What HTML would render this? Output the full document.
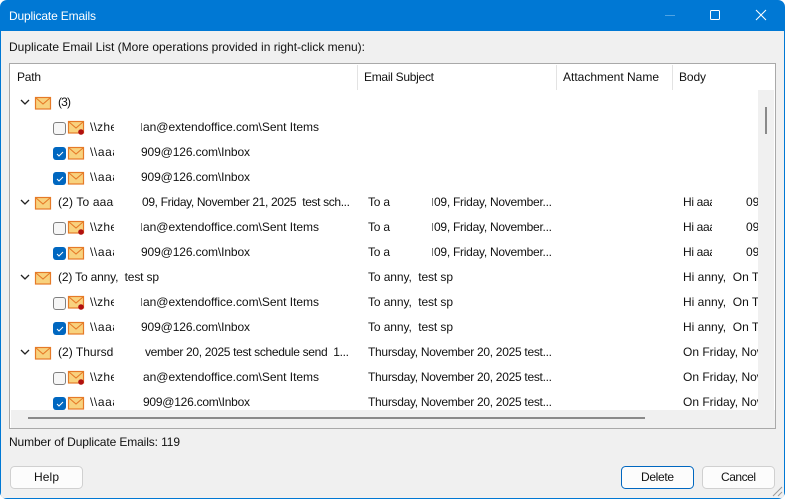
<!DOCTYPE html>
<html><head><meta charset="utf-8"><style>
html,body{margin:0;padding:0;width:785px;height:499px;overflow:hidden;background:#fff}
svg{display:block;font-family:"Liberation Sans",sans-serif;font-size:12px;fill:#111}
text{white-space:pre}
</style></head><body>
<svg width="785" height="499" viewBox="0 0 785 499" xmlns="http://www.w3.org/2000/svg">
<defs>
<g id="env"><rect x=".5" y=".5" width="15" height="11.500" fill="#f8d27e" stroke="#e67a28" stroke-width="1.200"/><path d="M1 1l7 6 7-6" fill="none" stroke="#e67a28" stroke-width="1.100"/></g>
<g id="chev"><path d="M21 100l4 4 4-4" fill="none" stroke="#222" stroke-width="1.300"/></g>
<g id="unc"><rect x="53.500" y="-5.500" width="12" height="12" rx="2.500" fill="#f6f6f6" stroke="#808080"/></g>
<g id="chk"><rect x="53" y="-6" width="13" height="13" rx="3" fill="#0067c0"/><path d="M57 1l2 2 4-4" fill="none" stroke="#fff"/></g>
<g id="sent"><use href="#unc"/><use href="#env" x="68" y="-7"/><circle cx="81" cy="4" r="2.800" fill="#b01010"/></g>
<g id="inb"><use href="#chk"/><use href="#env" x="68" y="-6"/></g>
<clipPath id="cb"><rect x="676" y="90" width="82" height="320"/></clipPath>
<clipPath id="cl"><rect x="50" y="90" width="64" height="320"/></clipPath>
<clipPath id="ch"><rect x="676" y="90" width="36" height="320"/></clipPath>
</defs>

<rect width="785" height="499" fill="#0078d4" rx="7"/>
<rect x="1" y="31" width="783" height="467" fill="#f0f0f0" rx="3"/>
<rect x="1" y="31" width="783" height="10" fill="#f0f0f0"/>
<text x="9" y="20" style="fill:#fff" textLength="87">Duplicate Emails</text>
<path d="M665 15.500h10" stroke="#4fa3e3" fill="none"/>
<rect x="710.500" y="10.500" width="9" height="9" rx="1" fill="none" stroke="#fff"/>
<path d="M756 10l10 10M766 10l-10 10" stroke="#fff" fill="none"/>

<text x="9" y="51" textLength="356">Duplicate Email List (More operations provided in right-click menu):</text>

<rect x="9.500" y="63.500" width="766" height="365" fill="#fff" stroke="#a9a9a9"/>
<path d="M357.500 65v25M556.500 65v25M672.500 65v25" stroke="#e3e3e3" fill="none"/>
<text x="17" y="81" textLength="24">Path</text>
<text x="364" y="81" textLength="70">Email Subject</text>
<text x="563" y="81" textLength="96">Attachment Name</text>
<text x="679" y="81" textLength="27">Body</text>

<!-- group 1 -->
<use href="#chev"/><use href="#env" x="35" y="97"/>
<text x="58" y="106" textLength="13">(3)</text>
<use href="#sent" y="128"/><text x="90" y="131" textLength="27" clip-path="url(#cl)">\\zhe</text><rect x="141" y="123" width="1" height="8" fill="#777"/><text x="143" y="131" textLength="176">an@extendoffice.com\Sent Items</text>
<use href="#inb" y="153"/><text x="90" y="156" textLength="29" clip-path="url(#cl)">\\aaa</text><text x="141" y="156" textLength="109">909@126.com\Inbox</text>
<use href="#inb" y="178"/><text x="90" y="181" textLength="29" clip-path="url(#cl)">\\aaa</text><text x="141" y="181" textLength="109">909@126.com\Inbox</text>

<!-- group 2 -->
<use href="#chev" y="100"/><use href="#env" x="35" y="197"/>
<text x="58" y="206" textLength="62" clip-path="url(#cl)">(2) To aaaa</text><text x="142" y="206" textLength="208">09, Friday, November 21, 2025  test sch...</text>
<text x="368" y="206" textLength="22">To a</text><rect x="432" y="198" width="1" height="8" fill="#777"/><text x="434" y="206" textLength="118">09, Friday, November...</text>
<use href="#sent" y="228"/><text x="90" y="231" textLength="27" clip-path="url(#cl)">\\zhe</text><rect x="141" y="223" width="1" height="8" fill="#777"/><text x="143" y="231" textLength="176">an@extendoffice.com\Sent Items</text>
<text x="368" y="231" textLength="22">To a</text><rect x="432" y="223" width="1" height="8" fill="#777"/><text x="434" y="231" textLength="118">09, Friday, November...</text>
<use href="#inb" y="253"/><text x="90" y="256" textLength="29" clip-path="url(#cl)">\\aaa</text><text x="141" y="256" textLength="109">909@126.com\Inbox</text>
<text x="368" y="256" textLength="22">To a</text><rect x="432" y="248" width="1" height="8" fill="#777"/><text x="434" y="256" textLength="118">09, Friday, November...</text>

<!-- group 3 -->
<use href="#chev" y="175"/><use href="#env" x="35" y="272"/>
<text x="58" y="281" textLength="101">(2) To anny,  test sp</text>
<text x="368" y="281" textLength="85">To anny,  test sp</text>
<use href="#sent" y="303"/><text x="90" y="306" textLength="27" clip-path="url(#cl)">\\zhe</text><rect x="141" y="298" width="1" height="8" fill="#777"/><text x="143" y="306" textLength="176">an@extendoffice.com\Sent Items</text>
<text x="368" y="306" textLength="85">To anny,  test sp</text>
<use href="#inb" y="328"/><text x="90" y="331" textLength="29" clip-path="url(#cl)">\\aaa</text><text x="141" y="331" textLength="109">909@126.com\Inbox</text>
<text x="368" y="331" textLength="85">To anny,  test sp</text>

<!-- group 4 -->
<use href="#chev" y="250"/><use href="#env" x="35" y="347"/>
<text x="58" y="356" textLength="62" clip-path="url(#cl)">(2) Thursda</text><text x="145" y="356" textLength="204">vember 20, 2025 test schedule send  1...</text>
<text x="368" y="356" textLength="184">Thursday, November 20, 2025 test...</text>
<use href="#sent" y="378"/><text x="90" y="381" textLength="27" clip-path="url(#cl)">\\zhe</text><text x="143" y="381" textLength="176">an@extendoffice.com\Sent Items</text>
<text x="368" y="381" textLength="184">Thursday, November 20, 2025 test...</text>
<use href="#inb" y="403"/><text x="90" y="406" textLength="29" clip-path="url(#cl)">\\aaa</text><text x="143" y="406" textLength="107">909@126.com\Inbox</text>
<text x="368" y="406" textLength="184">Thursday, November 20, 2025 test...</text>

<!-- body column -->
<g clip-path="url(#cb)">
<text x="683" y="206" textLength="33" clip-path="url(#ch)">Hi aaa</text><text x="746" y="206">09</text>
<text x="683" y="231" textLength="33" clip-path="url(#ch)">Hi aaa</text><text x="746" y="231">09</text>
<text x="683" y="256" textLength="33" clip-path="url(#ch)">Hi aaa</text><text x="746" y="256">09</text>
<text x="683" y="281">Hi anny,  On Thu</text>
<text x="683" y="306">Hi anny,  On Thu</text>
<text x="683" y="331">Hi anny,  On Thu</text>
<text x="683" y="356">On Friday, Nov 21</text>
<text x="683" y="381">On Friday, Nov 21</text>
<text x="683" y="406">On Friday, Nov 21</text>
</g>

<!-- scrollbars -->
<rect x="758" y="90" width="16" height="320" fill="#f0f0f0"/>
<rect x="765" y="107" width="2" height="27" fill="#8a8a8a"/>
<rect x="11" y="410" width="764" height="18" fill="#f0f0f0"/>
<rect x="28" y="417" width="617" height="2" fill="#8a8a8a"/>

<text x="9" y="446" textLength="171">Number of Duplicate Emails: 119</text>

<rect x="10.500" y="466.500" width="72" height="22" rx="4" fill="#fcfcfc" stroke="#d0d0d0"/>
<text x="34" y="481" textLength="25">Help</text>
<rect x="621.500" y="466.500" width="72" height="22" rx="4" fill="#fcfcfc" stroke="#0067c0"/>
<text x="641" y="481" textLength="33">Delete</text>
<rect x="702.500" y="466.500" width="72" height="22" rx="4" fill="#fcfcfc" stroke="#d0d0d0"/>
<text x="721" y="481" textLength="35">Cancel</text>
<path d="M773 496l9-9M778 496l4-4" stroke="#9a9a9a" fill="none"/>
</svg>
</body></html>
